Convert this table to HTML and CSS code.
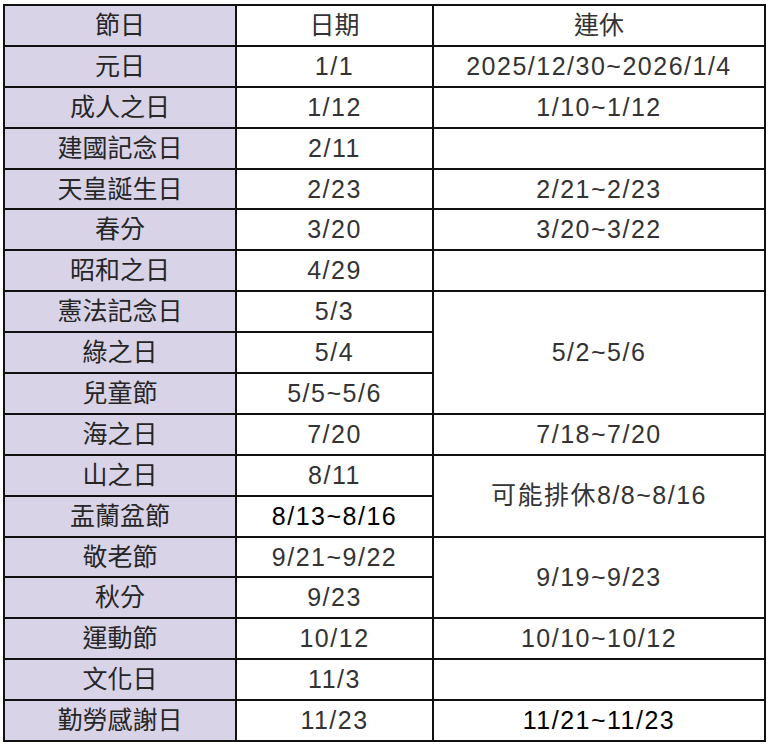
FILE: index.html
```html
<!DOCTYPE html>
<html lang="zh-Hant">
<head>
<meta charset="utf-8">
<title>節日</title>
<link rel="stylesheet" href="styles.css">
</head>
<body>
<table class="holidays">
  <colgroup>
    <col class="c1">
    <col class="c2">
    <col class="c3">
  </colgroup>
  <tbody>
    <tr><td class="name">節日</td><td>日期</td><td>連休</td></tr>
    <tr><td class="name">元日</td><td class="num">1/1</td><td class="num">2025/12/30~2026/1/4</td></tr>
    <tr><td class="name">成人之日</td><td class="num">1/12</td><td class="num">1/10~1/12</td></tr>
    <tr><td class="name">建國記念日</td><td class="num">2/11</td><td></td></tr>
    <tr><td class="name">天皇誕生日</td><td class="num">2/23</td><td class="num">2/21~2/23</td></tr>
    <tr><td class="name">春分</td><td class="num">3/20</td><td class="num">3/20~3/22</td></tr>
    <tr><td class="name">昭和之日</td><td class="num">4/29</td><td></td></tr>
    <tr><td class="name">憲法記念日</td><td class="num">5/3</td><td class="num" rowspan="3">5/2~5/6</td></tr>
    <tr><td class="name">綠之日</td><td class="num">5/4</td></tr>
    <tr><td class="name">兒童節</td><td class="num">5/5~5/6</td></tr>
    <tr><td class="name">海之日</td><td class="num">7/20</td><td class="num">7/18~7/20</td></tr>
    <tr><td class="name">山之日</td><td class="num">8/11</td><td class="num" rowspan="2">可能排休8/8~8/16</td></tr>
    <tr><td class="name">盂蘭盆節</td><td class="num dark">8/13~8/16</td></tr>
    <tr><td class="name">敬老節</td><td class="num">9/21~9/22</td><td class="num" rowspan="2">9/19~9/23</td></tr>
    <tr><td class="name">秋分</td><td class="num">9/23</td></tr>
    <tr><td class="name">運動節</td><td class="num">10/12</td><td class="num">10/10~10/12</td></tr>
    <tr><td class="name">文化日</td><td class="num">11/3</td><td></td></tr>
    <tr><td class="name">勤勞感謝日</td><td class="num">11/23</td><td class="num dark">11/21~11/23</td></tr>
  </tbody>
</table>
</body>
</html>
```
FILE: styles.css
```css
html, body {
  margin: 0;
  padding: 0;
  background: #ffffff;
}

body {
  padding: 4px 0 0 3px;
}

.holidays {
  border-collapse: collapse;
  table-layout: fixed;
  width: 761px;
  font-family: "Liberation Sans", "Noto Sans CJK TC", sans-serif;
  font-size: 25px;
  color: #333333;
}

.holidays .c1 { width: 232px; }
.holidays .c2 { width: 197px; }
.holidays .c3 { width: 332px; }

.holidays tr {
  height: 40.9px;
}

.holidays td {
  border: 2px solid #111111;
  padding: 0;
  text-align: center;
  vertical-align: middle;
  line-height: 1;
  white-space: nowrap;
}

.holidays td.name {
  background: #d9d3e8;
  color: #262626;
}

.holidays td.num {
  letter-spacing: 1.5px;
}

.holidays td.dark {
  color: #000000;
}
```
